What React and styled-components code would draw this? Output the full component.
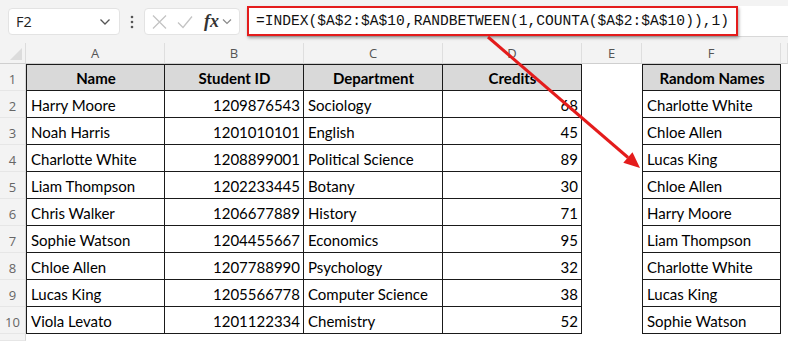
import React from 'react';
import styled, { createGlobalStyle } from 'styled-components';

const Global = createGlobalStyle`
  html, body { margin: 0; padding: 0; background: #fff; }
  body { width: 788px; height: 341px; overflow: hidden; }
  * { box-sizing: border-box; }
`;

const Page = styled.div`
  position: relative;
  width: 788px;
  height: 341px;
  background: #fff;
  overflow: hidden;
`;

const Toolbar = styled.div`
  display: flex;
  align-items: center;
  height: 43px;
  background: #f3f3f3;
  padding-left: 8px;
`;

const Box = styled.div`
  display: flex;
  align-items: center;
  height: 27px;
  width: ${p => p.$w}px;
  background: #fff;
  border: 1px solid #e3e3e3;
  border-radius: 4px;
`;

const NameText = styled.span`
  flex: 1;
  padding-left: 7px;
  font-family: "Open Sans", "Noto Sans", sans-serif;
  font-size: 14.5px;
  color: #222;
`;

const Dots = styled.div`
  width: 24px;
  display: flex;
  justify-content: center;
`;

const Fx = styled.span`
  font-family: "Liberation Serif", serif;
  font-style: italic;
  font-weight: bold;
  font-size: 18px;
  color: #333;
  margin: 0 3px 0 11px;
`;

const FormulaField = styled.div`
  flex: 1;
  display: flex;
  align-items: stretch;
  height: 31px;
  margin-left: 7px;
  background: #fff;
  border-bottom: 1px solid #d8d8d8;
`;

const FormulaBox = styled.div`
  display: flex;
  align-items: center;
  padding: 0 7px;
  border: 2px solid #e41c1c;
  box-shadow: 1px 2px 3px rgba(0,0,0,0.35);
  font-family: "Liberation Mono", "DejaVu Sans Mono", monospace;
  font-size: 14.6px;
  color: #111;
  white-space: nowrap;
`;

const Sheet = styled.div`
  display: grid;
  grid-template-columns: 26px 139px 139px 139px 139px 60px 139px 7px;
  grid-template-rows: 21px repeat(10, 27px) 7px;
`;

const Corner = styled.div`
  background: #f3f3f3;
  border-right: 1px solid #dcdcdc;
  border-bottom: 1px solid #cfcfcf;
  display: flex;
  align-items: flex-end;
  justify-content: flex-end;
  padding: 0 3px 3px 0;
`;

const Triangle = styled.div`
  width: 0;
  height: 0;
  border-left: 12px solid transparent;
  border-bottom: 12px solid #dcdcdc;
`;

const ColHead = styled.div`
  background: #f3f3f3;
  border-right: 1px solid #dedede;
  border-bottom: 1px solid #cfcfcf;
  display: flex;
  align-items: center;
  justify-content: center;
  font-family: "Open Sans", "Noto Sans", sans-serif;
  font-size: 13px;
  color: #555;
`;

const RowHead = styled.div`
  background: #f3f3f3;
  border-right: 1px solid #d6d6d6;
  border-bottom: 1px solid #e6e6e6;
  display: flex;
  align-items: flex-end;
  justify-content: center;
  padding-bottom: 2px;
  font-family: "Open Sans", "Noto Sans", sans-serif;
  font-size: 13px;
  color: #666;
`;

const Cell = styled.div`
  display: flex;
  align-items: flex-end;
  justify-content: ${p => (p.$align === 'right' ? 'flex-end' : p.$align === 'center' ? 'center' : 'flex-start')};
  padding: 0 3px 3px 4px;
  font-family: Lato, "Liberation Sans", sans-serif;
  font-size: 15px;
  font-weight: ${p => (p.$head ? 700 : 400)};
  color: #000;
  white-space: nowrap;
  overflow: hidden;
  background: ${p => (p.$head ? '#d9d9d9' : '#fff')};
  border-right: 1px solid #1a1a1a;
  border-bottom: 1px solid #1a1a1a;
  border-left: ${p => (p.$first ? '1px solid #1a1a1a' : 'none')};
  border-top: ${p => (p.$top ? '1px solid #1a1a1a' : 'none')};
`;

const Blank = styled.div`
  background: #fff;
`;

const Overlay = styled.svg`
  position: absolute;
  left: 0;
  top: 0;
  pointer-events: none;
`;

const rows = [
  ['Harry Moore', '1209876543', 'Sociology', '68', 'Charlotte White'],
  ['Noah Harris', '1201010101', 'English', '45', 'Chloe Allen'],
  ['Charlotte White', '1208899001', 'Political Science', '89', 'Lucas King'],
  ['Liam Thompson', '1202233445', 'Botany', '30', 'Chloe Allen'],
  ['Chris Walker', '1206677889', 'History', '71', 'Harry Moore'],
  ['Sophie Watson', '1204455667', 'Economics', '95', 'Liam Thompson'],
  ['Chloe Allen', '1207788990', 'Psychology', '32', 'Charlotte White'],
  ['Lucas King', '1205566778', 'Computer Science', '38', 'Lucas King'],
  ['Viola Levato', '1201122334', 'Chemistry', '52', 'Sophie Watson'],
];

const Chevron = ({ x = 0 }) => (
  <svg width="12" height="8" viewBox="0 0 12 8" style={{ marginRight: x }}>
    <path d="M1.5 1.5 L6 6 L10.5 1.5" fill="none" stroke="#555" strokeWidth="1.3" />
  </svg>
);

export default function App() {
  return (
    <Page>
      <Global />
      <Toolbar>
        <Box $w={112}>
          <NameText>F2</NameText>
          <Chevron x={8} />
        </Box>
        <Dots>
          <svg width="4" height="14" viewBox="0 0 4 14">
            <circle cx="2" cy="2" r="1.3" fill="#555" />
            <circle cx="2" cy="7" r="1.3" fill="#555" />
            <circle cx="2" cy="12" r="1.3" fill="#555" />
          </svg>
        </Dots>
        <Box $w={96}>
          <svg width="42" height="16" viewBox="0 0 42 16" style={{ marginLeft: 6 }}>
            <path d="M2 1.5 L15 14.5 M15 1.5 L2 14.5" stroke="#c4c4c4" strokeWidth="1.3" fill="none" />
            <path d="M27 8.5 L32 13.5 L41 2.5" stroke="#c4c4c4" strokeWidth="1.3" fill="none" />
          </svg>
          <Fx>fx</Fx>
          <svg width="10" height="7" viewBox="0 0 10 7">
            <path d="M1 1.5 L5 5.5 L9 1.5" fill="none" stroke="#8a8a8a" strokeWidth="1.2" />
          </svg>
        </Box>
        <FormulaField>
          <FormulaBox>=INDEX($A$2:$A$10,RANDBETWEEN(1,COUNTA($A$2:$A$10)),1)</FormulaBox>
        </FormulaField>
      </Toolbar>
      <Sheet>
        <Corner><Triangle /></Corner>
        {['A', 'B', 'C', 'D', 'E', 'F', ''].map((l, i) => (
          <ColHead key={i}>{l}</ColHead>
        ))}

        <RowHead>1</RowHead>
        <Cell $head $first $top $align="center">Name</Cell>
        <Cell $head $top $align="center">Student ID</Cell>
        <Cell $head $top $align="center">Department</Cell>
        <Cell $head $top $align="center">Credits</Cell>
        <Blank />
        <Cell $head $first $top $align="center">Random Names</Cell>
        <Blank />

        {rows.map((r, i) => (
          <React.Fragment key={i}>
            <RowHead>{i + 2}</RowHead>
            <Cell $first>{r[0]}</Cell>
            <Cell $align="right">{r[1]}</Cell>
            <Cell>{r[2]}</Cell>
            <Cell $align="right">{r[3]}</Cell>
            <Blank />
            <Cell $first>{r[4]}</Cell>
            <Blank />
          </React.Fragment>
        ))}

        <RowHead />
        {Array.from({ length: 7 }).map((_, i) => <Blank key={i} />)}
      </Sheet>
      <Overlay width="788" height="341" viewBox="0 0 788 341">
        <line x1="488" y1="37" x2="628" y2="157.5" stroke="#e41c1c" strokeWidth="3" />
        <polygon points="640,168 623.3,162.8 632.5,152.2" fill="#e41c1c" />
      </Overlay>
    </Page>
  );
}
